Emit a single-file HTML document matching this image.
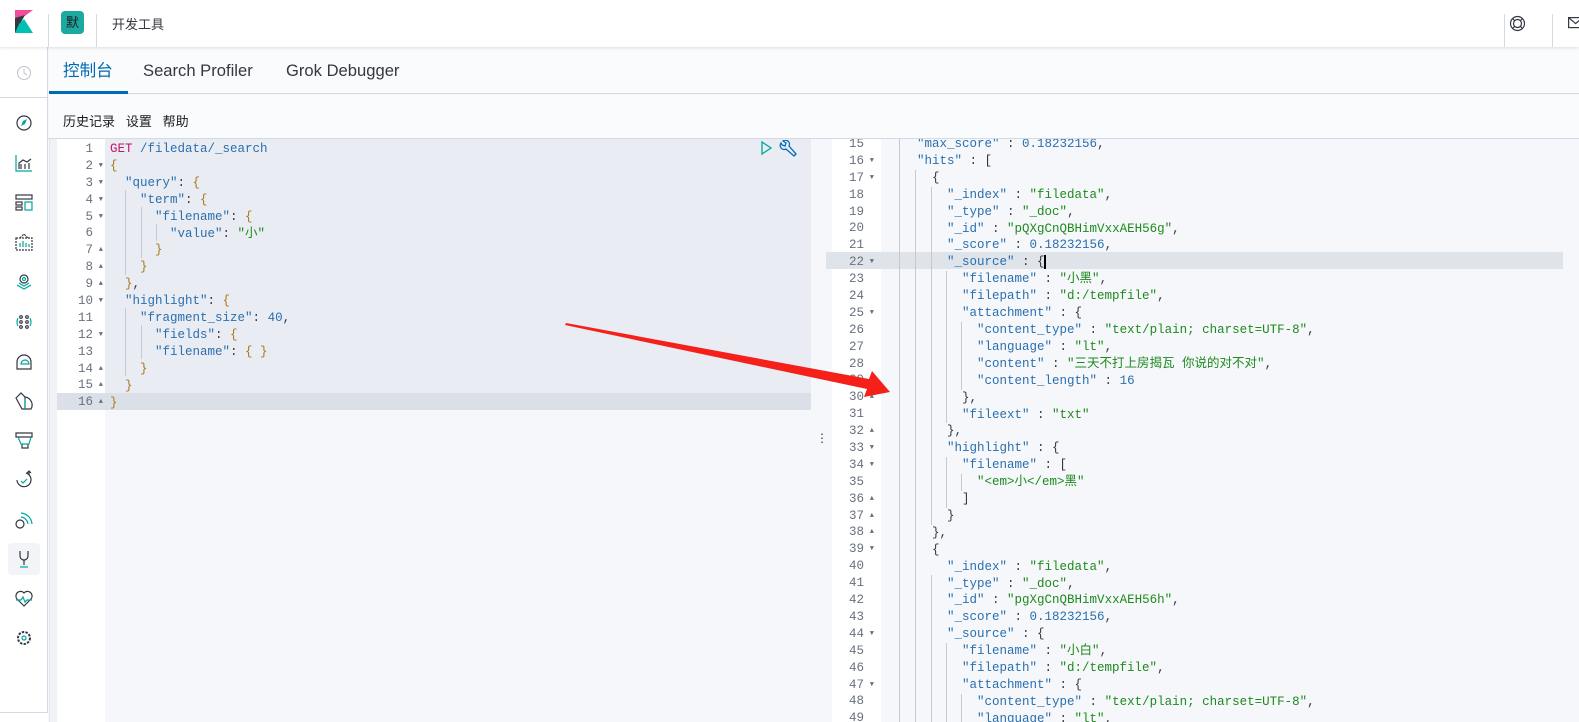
<!DOCTYPE html>
<html><head><meta charset="utf-8">
<style>
*{margin:0;padding:0;box-sizing:border-box}
body{width:1579px;height:722px;overflow:hidden;background:#f5f7fa;font-family:"Liberation Sans","Noto Sans CJK SC",sans-serif;position:relative;color:#343741}
.abs{position:absolute}
.code{font-family:"Liberation Mono","Noto Sans CJK SC",monospace;font-size:12.5px;line-height:16.9px;white-space:pre}
.k{color:#2a6fae}.s{color:#1e8a1e}.n{color:#2a6fae}.p{color:#343741}.b{color:#a87a1a}.g{color:#c4146a}
.ln{font-family:"Liberation Mono",monospace;font-size:12.5px;color:#69707d}
.ln div{height:16.9px;line-height:16.9px;text-align:right;padding-right:12px;position:relative}
.ln i{position:absolute;right:2px;top:0;font-style:normal;font-size:7px;line-height:16.9px}
.gl{position:absolute;width:1px;background:#c5c9d1}
.tab{position:absolute;top:0;height:47px;line-height:47px;font-size:16.6px;color:#343741}
</style></head><body>
<!-- header -->
<div class="abs" style="left:0;top:0;width:1579px;height:47px;background:#fff;box-shadow:0 1px 3px rgba(0,0,0,.12);z-index:3">
  <svg class="abs" style="left:15px;top:10px" width="18" height="23" viewBox="0 0 18 23"><polygon points="0,0 18,0 0,13" fill="#f04e98"/><polygon points="0,8 10,5 0,23" fill="#343741"/><polygon points="4,14 9,9 18,23 0,23" fill="#00bfb3"/></svg>
  <div class="abs" style="left:48px;top:14px;width:1px;height:33px;background:#d3dae6"></div>
  <div class="abs" style="left:61px;top:11px;width:23px;height:23px;border-radius:4px;background:#1ba9a0;color:#1a1c21;font-size:13px;line-height:23px;text-align:center">默</div>
  <div class="abs" style="left:96px;top:14px;width:1px;height:33px;background:#d3dae6"></div>
  <div class="abs" style="left:112px;top:14px;font-size:13px;color:#343741">开发工具</div>
  <div class="abs" style="left:1504px;top:14px;width:1px;height:33px;background:#d3dae6"></div>
  <svg class="abs" style="left:1509px;top:15px" width="17" height="17" viewBox="0 0 17 17" fill="none" stroke="#343741" stroke-width="1.2"><circle cx="8.5" cy="8.5" r="7"/><circle cx="8.5" cy="8.5" r="4"/><path d="M3.5 3.5l2.2 2.2M13.5 3.5l-2.2 2.2M3.5 13.5l2.2-2.2M13.5 13.5l-2.2-2.2"/></svg>
  <div class="abs" style="left:1552px;top:14px;width:1px;height:33px;background:#d3dae6"></div>
  <svg class="abs" style="left:1568px;top:17px" width="14" height="12" viewBox="0 0 14 12" fill="none" stroke="#343741" stroke-width="1.2"><rect x="0.6" y="0.6" width="14" height="10"/><path d="M0.6 0.6l7 6 7-6"/></svg>
</div>
<!-- sidebar -->
<div class="abs" style="left:0;top:47px;width:48px;height:675px;background:#fff;border-right:1px solid #d3dae6;z-index:2">
  <div class="abs" style="left:0;top:50px;width:48px;height:1px;background:#d3dae6"></div>
  <svg class="abs" style="left:16px;top:18px" width="16" height="16" viewBox="0 0 16 16" fill="none" stroke="#c2c6cc" stroke-width="1.1"><circle cx="8" cy="8" r="6.5"/><path d="M8 4v4l3 2"/></svg>
  <div class="abs" style="left:8px;top:496px;width:32px;height:32px;border-radius:4px;background:#f2f4f8"></div>
</div>
<svg class="abs" style="left:0;top:0;z-index:4" width="48" height="660" fill="none" stroke-width="1.2">
 <g stroke="#343741"><circle cx="24" cy="123" r="7"/></g><path d="M21 126l2-5 4-2-2 5z" fill="#00a69b"/>
 <g transform="translate(16,155)"><path d="M0 0v16h16" stroke="#00a69b"/><path d="M3 14v-6l4-3 4 2 4-3M5 14v-5M9 14v-5M13 14v-6" stroke="#343741"/></g>
 <g transform="translate(16,195)"><rect x="0" y="0" width="16" height="4" stroke="#343741"/><rect x="0" y="7" width="6" height="3" stroke="#343741"/><rect x="0" y="12" width="6" height="3" stroke="#343741"/><rect x="9" y="7" width="7" height="8" stroke="#00a69b"/></g>
 <g transform="translate(16,234)"><path d="M0 4h16v12H0zM4 4l4-4 4 4" stroke="#343741" stroke-dasharray="2 1"/><path d="M4 13V9M7 13V7M10 13V9M13 13v-3" stroke="#00a69b"/></g>
 <g transform="translate(16,274)"><circle cx="8" cy="5" r="4" stroke="#343741"/><circle cx="8" cy="5" r="1.5" stroke="#00a69b"/><path d="M1 11l7 4 7-4M3 9l5 3 5-3" stroke="#00a69b"/></g>
 <g transform="translate(16,314)" stroke="#343741"><circle cx="5" cy="3" r="1.3"/><circle cx="11" cy="3" r="1.3"/><circle cx="5" cy="8" r="1.3"/><circle cx="11" cy="8" r="1.3"/><circle cx="5" cy="13" r="1.3"/><circle cx="11" cy="13" r="1.3"/><path d="M2 4Q0 8 2 12M14 4q2 4 0 8" stroke="#00a69b"/></g>
 <g transform="translate(16,353)"><path d="M1 16V9a7 7 0 0 1 14 0v7z" stroke="#343741"/><path d="M5 11a4 4 0 0 1 8 0z" stroke="#00a69b"/></g>
 <g transform="translate(16,393)"><path d="M0 5l5-5 4 4v12H6zM9 4a8 8 0 0 1 6 12H9" stroke="#343741"/><path d="M9 16V6" stroke="#00a69b"/></g>
 <g transform="translate(16,432)"><path d="M0 1h16v4H0zM6 12v4h6v-4" stroke="#343741"/><path d="M2 5l3 7h8l2-7" stroke="#00a69b"/></g>
 <g transform="translate(16,472)"><path d="M10 1a7 7 0 1 1-9 7" stroke="#343741"/><path d="M13 3V0M11 1l2-2 2 2" stroke="#343741"/><path d="M5 9l2 2 4-4" stroke="#00a69b"/></g>
 <g transform="translate(16,512)"><path d="M4 16a4 4 0 1 1 0-8 4 4 0 0 1 0 8" stroke="#343741"/><path d="M5 5a8 8 0 0 1 7 7M5 1a12 12 0 0 1 11 11" stroke="#00a69b"/></g>
 <g transform="translate(16,551)"><path d="M4 0v5a4 4 0 0 0 8 0V0M8 9v5" stroke="#343741"/><path d="M4 16h8" stroke="#00a69b"/></g>
 <g transform="translate(16,591)"><path d="M8 15L1 8a4 4 0 0 1 7-6 4 4 0 0 1 7 6z" stroke="#343741"/><path d="M0 9h5l2-3 2 5 2-2h5" stroke="#00a69b"/></g>
 <g transform="translate(16,630)"><circle cx="8" cy="8" r="6" stroke="#343741" stroke-dasharray="2.4 1.3" stroke-width="2"/><circle cx="8" cy="8" r="2" stroke="#00a69b"/></g>
</svg>
<div class="abs" style="left:0;top:712px;width:48px;height:10px;border-top:1px solid #d3dae6;background:#fff;z-index:4"></div>
<!-- tabs -->
<div class="abs" style="left:49px;top:47px;width:1530px;height:47px;background:#fafbfd;border-bottom:1px solid #d3dae6">
  <div class="tab" style="left:14px;color:#006bb4">控制台</div>
  <div class="abs" style="left:0;top:44px;width:79px;height:3px;background:#006bb4"></div>
  <div class="tab" style="left:94px">Search Profiler</div>
  <div class="tab" style="left:237px">Grok Debugger</div>
</div>
<div class="abs" style="left:49px;top:95px;width:1530px;height:44px;background:#fafbfd;border-bottom:1px solid #d3dae6">
  <div class="abs" style="left:14px;top:16px;font-size:13px;color:#1a1c21">历史记录&nbsp;&nbsp;&nbsp;设置&nbsp;&nbsp;&nbsp;帮助</div>
</div>
<!-- left editor -->
<div class="abs" style="left:49px;top:139px;width:8px;height:583px;background:#f0f2f6;border-left:1px solid #e3e7ee"></div>
<div class="abs" style="left:57px;top:139px;width:48px;height:583px;background:#fff"></div>
<div class="abs" style="left:105px;top:139px;width:706px;height:254px;background:#e9ecf3"></div>
<div class="abs" style="left:57px;top:393px;width:754px;height:17px;background:#dbe0e8"></div>
<div class="abs" style="left:105px;top:410px;width:706px;height:312px;background:#f5f7fa"></div>
<div class="abs ln" style="left:57px;top:141px;width:48px">
<div>1</div><div>2<i>▼</i></div><div>3<i>▼</i></div><div>4<i>▼</i></div><div>5<i>▼</i></div><div>6</div><div>7<i>▲</i></div><div>8<i>▲</i></div><div>9<i>▲</i></div><div>10<i>▼</i></div><div>11</div><div>12<i>▼</i></div><div>13</div><div>14<i>▲</i></div><div>15<i>▲</i></div><div>16<i>▲</i></div>
</div>
<div class="gl" style="left:125px;top:190px;height:85px"></div>
<div class="gl" style="left:141px;top:207px;height:51px"></div>
<div class="gl" style="left:156px;top:224px;height:17px"></div>
<div class="gl" style="left:125px;top:308px;height:68px"></div>
<div class="gl" style="left:141px;top:325px;height:34px"></div>
<div class="abs code" style="left:110px;top:141px"><span class="g">GET</span> <span class="k">/filedata/_search</span>
<span class="b">{</span>
  <span class="k">"query"</span><span class="p">: </span><span class="b">{</span>
    <span class="k">"term"</span><span class="p">: </span><span class="b">{</span>
      <span class="k">"filename"</span><span class="p">: </span><span class="b">{</span>
        <span class="k">"value"</span><span class="p">: </span><span class="s">"小"</span>
      <span class="b">}</span>
    <span class="b">}</span>
  <span class="b">}</span><span class="p">,</span>
  <span class="k">"highlight"</span><span class="p">: </span><span class="b">{</span>
    <span class="k">"fragment_size"</span><span class="p">: </span><span class="n">40</span><span class="p">,</span>
      <span class="k">"fields"</span><span class="p">: </span><span class="b">{</span>
      <span class="k">"filename"</span><span class="p">: </span><span class="b">{ }</span>
    <span class="b">}</span>
  <span class="b">}</span>
<span class="b">}</span></div>
<svg class="abs" style="left:760px;top:140px" width="38" height="18" viewBox="0 0 38 18" fill="none" stroke-width="1.3"><path d="M2 2v12l9-6z" stroke="#00a69b"/><path d="M21 3a4 4 0 0 0 5 6l8 7 2-2-7-8a4 4 0 0 0-6-5l3 2-1 3-3-1z" stroke="#006bb4"/></svg>
<!-- splitter -->
<div class="abs" style="left:811px;top:139px;width:21px;height:583px;background:#f5f7fa"></div>
<div class="abs" style="left:816px;top:432px;font-size:12px;color:#343741;line-height:12px">⋮</div>
<!-- right editor -->
<div class="abs" style="left:832px;top:139px;width:49px;height:583px;background:#fff"></div>
<div class="abs" style="left:826px;top:252px;width:737px;height:17px;background:#dfe3ea"></div>
<div class="abs" style="left:826px;top:139px;width:50px;height:583px;overflow:hidden">
<div class="ln" style="position:absolute;left:0;top:-3px;width:50px">
<div>15</div><div>16<i>▼</i></div><div>17<i>▼</i></div><div>18</div><div>19</div><div>20</div><div>21</div><div>22<i>▼</i></div><div>23</div><div>24</div><div>25<i>▼</i></div><div>26</div><div>27</div><div>28</div><div>29</div><div>30<i>▲</i></div><div>31</div><div>32<i>▲</i></div><div>33<i>▼</i></div><div>34<i>▼</i></div><div>35</div><div>36<i>▲</i></div><div>37<i>▲</i></div><div>38<i>▲</i></div><div>39<i>▼</i></div><div>40</div><div>41</div><div>42</div><div>43</div><div>44<i>▼</i></div><div>45</div><div>46</div><div>47<i>▼</i></div><div>48</div><div>49</div>
</div></div>
<div class="gl" style="left:899px;top:139px;height:583px"></div>
<div class="gl" style="left:915px;top:170px;height:552px"></div>
<div class="gl" style="left:931px;top:187px;height:338px"></div>
<div class="gl" style="left:931px;top:575px;height:147px"></div>
<div class="gl" style="left:946px;top:271px;height:152px"></div>
<div class="gl" style="left:946px;top:457px;height:51px"></div>
<div class="gl" style="left:946px;top:643px;height:79px"></div>
<div class="gl" style="left:961px;top:322px;height:68px"></div>
<div class="gl" style="left:961px;top:474px;height:17px"></div>
<div class="gl" style="left:961px;top:694px;height:28px"></div>
<div class="abs" style="left:881px;top:139px;width:690px;height:583px;overflow:hidden">
<div class="abs code" style="left:6px;top:-3px">    <span class="k">"max_score"</span> : <span class="n">0.18232156</span>,
    <span class="k">"hits"</span> : [
      {
        <span class="k">"_index"</span> : <span class="s">"filedata"</span>,
        <span class="k">"_type"</span> : <span class="s">"_doc"</span>,
        <span class="k">"_id"</span> : <span class="s">"pQXgCnQBHimVxxAEH56g"</span>,
        <span class="k">"_score"</span> : <span class="n">0.18232156</span>,
        <span class="k">"_source"</span> : {<span style="border-left:2px solid #000;margin-left:-1px"></span>
          <span class="k">"filename"</span> : <span class="s">"小黑"</span>,
          <span class="k">"filepath"</span> : <span class="s">"d:/tempfile"</span>,
          <span class="k">"attachment"</span> : {
            <span class="k">"content_type"</span> : <span class="s">"text/plain; charset=UTF-8"</span>,
            <span class="k">"language"</span> : <span class="s">"lt"</span>,
            <span class="k">"content"</span> : <span class="s">"三天不打上房揭瓦 你说的对不对"</span>,
            <span class="k">"content_length"</span> : <span class="n">16</span>
          },
          <span class="k">"fileext"</span> : <span class="s">"txt"</span>
        },
        <span class="k">"highlight"</span> : {
          <span class="k">"filename"</span> : [
            <span class="s">"&lt;em&gt;小&lt;/em&gt;黑"</span>
          ]
        }
      },
      {
        <span class="k">"_index"</span> : <span class="s">"filedata"</span>,
        <span class="k">"_type"</span> : <span class="s">"_doc"</span>,
        <span class="k">"_id"</span> : <span class="s">"pgXgCnQBHimVxxAEH56h"</span>,
        <span class="k">"_score"</span> : <span class="n">0.18232156</span>,
        <span class="k">"_source"</span> : {
          <span class="k">"filename"</span> : <span class="s">"小白"</span>,
          <span class="k">"filepath"</span> : <span class="s">"d:/tempfile"</span>,
          <span class="k">"attachment"</span> : {
            <span class="k">"content_type"</span> : <span class="s">"text/plain; charset=UTF-8"</span>,
            <span class="k">"language"</span> : <span class="s">"lt"</span>,</div>
</div>
<div class="abs" style="left:0;top:138px;width:1579px;height:1px;background:#d3dae6"></div>
<!-- arrow -->
<svg class="abs" style="left:0;top:0;z-index:5" width="1579" height="722"><polygon points="566,323 869,379 872,371 890,392 864,397 867,389 565,325" fill="#f5201a"/></svg>
</body></html>
